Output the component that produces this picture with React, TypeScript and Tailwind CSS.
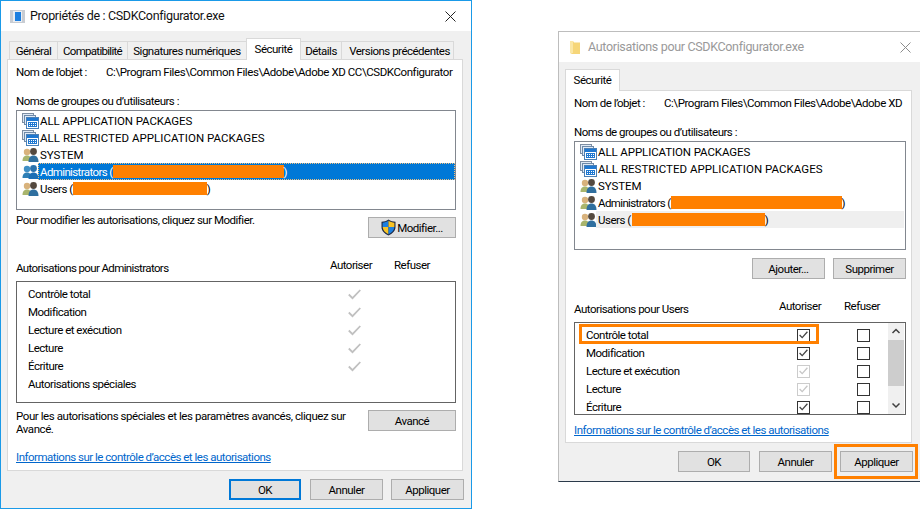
import React from "react";

function PackageIcon() {
  return (
    <svg width="17" height="16" viewBox="0 0 17 16" className="shrink-0">
      <rect x="0.5" y="0.5" width="11" height="9" fill="#dfe9f5" stroke="#7d8ea3" />
      <rect x="2.5" y="2.5" width="11" height="9" fill="#dfe9f5" stroke="#6f8aa8" />
      <rect x="4.5" y="4.5" width="12" height="11" fill="#fff" stroke="#4a7fb5" />
      <rect x="5" y="5" width="11" height="3" fill="#1f78d1" />
      <rect x="6" y="9" width="9" height="5" fill="#1f78d1" />
      <path d="M7 10.5h1M9 10.5h1M11 10.5h1M13 10.5h1M7 12.5h1M9 12.5h1M11 12.5h1M13 12.5h1" stroke="#fff" strokeWidth="1" />
    </svg>
  );
}

function UsersIcon({ selected = false }: { selected?: boolean }) {
  const a = selected ? "#2f7fb5" : "#a9b56d";
  const aHead = selected ? "#3f8fc4" : "#d8b27c";
  const b = selected ? "#1c6fb5" : "#2f6f9f";
  const bHead = selected ? "#2a72ad" : "#54493f";
  return (
    <svg width="17" height="16" viewBox="0 0 17 16" className="shrink-0">
      <circle cx="5" cy="5" r="3.2" fill={aHead} />
      <path d="M0.5 14c0-4 2-5.5 4.5-5.5S9.5 10 9.5 14z" fill={a} />
      <circle cx="11.5" cy="4.5" r="3.4" fill={bHead} />
      <path d="M6.5 15c0-4.5 2.200-6.500 5-6.500s5 2 5 6.500z" fill={b} />
    </svg>
  );
}

function Shield() {
  return (
    <svg width="15" height="17" viewBox="0 0 15 17" className="shrink-0">
      <path d="M7.500 0.500C5.500 2 3 2.700 0.500 2.700V8c0 4 3 6.700 7 8.500 4-1.800 7-4.500 7-8.500V2.700C12 2.700 9.500 2 7.500 0.500z" fill="#1f2a44" />
      <path d="M7.500 1.800V8H1.600V3.700C3.600 3.600 5.800 3 7.500 1.800z" fill="#1c7fe0" />
      <path d="M7.500 1.800V8h5.900V3.700C11.400 3.600 9.200 3 7.500 1.800z" fill="#f7c325" />
      <path d="M7.500 8v7.200C4.500 13.800 1.900 11.500 1.600 8z" fill="#f7c325" />
      <path d="M7.500 8v7.200c3-1.400 5.600-3.700 5.900-7.200z" fill="#1c7fe0" />
    </svg>
  );
}

function Folder() {
  return (
    <svg width="10" height="14" viewBox="0 0 10 14">
      <path d="M0 1h3l1 1.500h6V14H2l-2-1z" fill="#f6d679" />
      <path d="M0 1h3v12H0z" fill="#fbe7a6" />
    </svg>
  );
}

function CloseX({ color }: { color: string }) {
  return (
    <svg width="11" height="11" viewBox="0 0 11 11">
      <path d="M0.500 0.500l10 10M10.500 0.500l-10 10" stroke={color} strokeWidth="1" />
    </svg>
  );
}

function Check({ color = "#c0c0c0" }: { color?: string }) {
  return (
    <svg width="13" height="11" viewBox="0 0 13 11">
      <path d="M0.800 5.500l3.700 3.700L12.300 1" fill="none" stroke={color} strokeWidth="1.800" />
    </svg>
  );
}

function Box({ state }: { state: "off" | "on" | "grey" }) {
  const border = state === "grey" ? "border-[#cccccc]" : "border-[#333333]";
  return (
    <span className={`flex h-[13px] w-[13px] items-center justify-center border bg-white ${border}`}>
      {state !== "off" && (
        <svg width="9" height="8" viewBox="0 0 9 8">
          <path d="M0.600 4l2.600 2.600L8.400 0.800" fill="none" stroke={state === "grey" ? "#c6c6c6" : "#444444"} strokeWidth="1.300" />
        </svg>
      )}
    </span>
  );
}

function Btn({ children, w = "w-[73px]", active = false }: { children: React.ReactNode; w?: string; active?: boolean }) {
  return (
    <div
      className={`flex h-[21px] shrink-0 items-center justify-center whitespace-nowrap bg-[#e1e1e1] ${w} ${
        active ? "border-2 border-[#0078d7]" : "border border-[#adadad]"
      }`}
    >
      {children}
    </div>
  );
}

function Row({ icon, children, cls = "" }: { icon: React.ReactNode; children: React.ReactNode; cls?: string }) {
  return (
    <div className="flex h-[17px] items-center whitespace-pre pl-[5px]">
      <span className="flex w-[16px] shrink-0 items-center">{icon}</span>
      <div className={`flex h-[17px] flex-1 items-center pl-[2px] pr-[1px] ${cls}`}>{children}</div>
    </div>
  );
}

function Redact({ w }: { w: string }) {
  return <span className={`inline-block h-[13px] bg-[#ff8000] ${w}`} />;
}

function Tab({ children, w, on = false }: { children: React.ReactNode; w: string; on?: boolean }) {
  return on ? (
    <div className={`z-10 flex h-[22px] items-center justify-center whitespace-nowrap border border-b-0 border-[#d9d9d9] bg-white pb-[2px] ${w}`}>{children}</div>
  ) : (
    <div className={`mt-[3px] flex h-[18px] items-center justify-center whitespace-nowrap border border-b-0 border-[#d9d9d9] bg-[#f0f0f0] ${w}`}>{children}</div>
  );
}

const LINK = "Informations sur le contrôle d’accès et les autorisations";

export default function App() {
  return (
    <div className="relative h-[509px] w-[920px] overflow-hidden bg-white font-['Roboto','Liberation_Sans',sans-serif] text-[11.5px] leading-[16px] tracking-[-0.5px] text-black">
      <div className="flex items-start">
        {/* Left dialog */}
        <div className="flex h-[509px] w-[472px] shrink-0 flex-col border border-[#1a9ae8] bg-[#f0f0f0]">
          <div className="flex h-[30px] shrink-0 items-center bg-white pl-[9px] pr-[15px]">
            <span className="mr-[5px] flex h-[13px] w-[15px] items-center justify-center border-x-[3px] border-y border-[#c8ccd2] bg-[#e9edf2]">
              <span className="h-[9px] w-[6px] bg-[#1c7fe0]" />
            </span>
            <span className="flex-1 text-[12.5px] tracking-[-0.33px] text-[#111]">Propriétés de : CSDKConfigurator.exe</span>
            <CloseX color="#222" />
          </div>
          <div className="flex h-[478px] flex-col pl-[6px] pt-[7px]">
            <div className="flex h-[21px] pl-[2px]">
              <Tab w="w-[49px]">Général</Tab>
              <Tab w="w-[71px] -ml-px tracking-[-0.7px]">Compatibilité</Tab>
              <Tab w="w-[120px] -ml-px">Signatures numériques</Tab>
              <Tab w="w-[55px] -ml-px" on>Sécurité</Tab>
              <Tab w="w-[42px] -ml-px">Détails</Tab>
              <Tab w="w-[113px] -ml-px pl-[4px]">Versions précédentes</Tab>
            </div>
            <div className="flex h-[412px] w-[456px] flex-col border border-[#d9d9d9] bg-white px-[8px]">
              <div className="mt-[4px] flex h-[16px] items-center whitespace-nowrap">
                <span className="w-[90px]">Nom de l’objet :</span>
                <span className="tracking-[-0.42px]">C:\Program Files\Common Files\Adobe\Adobe XD CC\CSDKConfigurator</span>
              </div>
              <div className="mt-[13px] h-[16px]">Noms de groupes ou d’utilisateurs :</div>
              <div className="mt-[1px] h-[100px] w-[440px] border border-[#82878f] pt-[1px]">
                <Row icon={<PackageIcon />}><span className="tracking-[-0.1px]">ALL APPLICATION PACKAGES</span></Row>
                <Row icon={<PackageIcon />}><span className="tracking-[0.04px]">ALL RESTRICTED APPLICATION PACKAGES</span></Row>
                <Row icon={<UsersIcon />}><span className="tracking-[-0.07px]">SYSTEM</span></Row>
                <Row icon={<UsersIcon selected />} cls="bg-[#0078d7] text-white outline-1 -outline-offset-1 outline-dotted outline-[#f0c080]">
                  <span className="tracking-[-0.62px]">Administrators (</span><Redact w="w-[171px]" />)
                </Row>
                <Row icon={<UsersIcon />}>
                  Users (<Redact w="w-[134px]" />)
                </Row>
              </div>
              <div className="mt-[7px] flex h-[22px] w-[440px] items-start justify-between">
                <span className="-mt-[5px]">Pour modifier les autorisations, cliquez sur Modifier.</span>
                <Btn w="w-[88px]">
                  <span className="mr-[1px]"><Shield /></span>Modifier...
                </Btn>
              </div>
              <div className="mt-[18px] flex h-[16px] w-[440px]">
                <span className="flex-1 pt-[3px] tracking-[-0.62px]">Autorisations pour Administrators</span>
                <span className="w-[60px] text-center">Autoriser</span>
                <span className="ml-[9px] mr-[22px] w-[44px] text-center">Refuser</span>
              </div>
              <div className="mt-[8px] h-[122px] w-[440px] border border-[#646464] pl-[11px] pt-[3px]">
                {["Contrôle total", "Modification", "Lecture et exécution", "Lecture", "Écriture", "Autorisations spéciales"].map((t, i) => (
                  <div key={t} className="flex h-[18px] items-center">
                    <span className="w-[320px]">{t}</span>
                    {i < 5 && <Check />}
                  </div>
                ))}
              </div>
              <div className="mt-[7px] flex h-[32px] w-[440px] justify-between">
                <span className="w-[340px] leading-[13px] tracking-[-0.43px]">
                  Pour les autorisations spéciales et les paramètres avancés, cliquez sur Avancé.
                </span>
                <Btn w="w-[88px]">Avancé</Btn>
              </div>
              <div className="mt-[7px] h-[16px] text-[#0066cc] underline">{LINK}</div>
            </div>
            <div className="mt-[8px] flex w-[457px] justify-end gap-[9px]">
              <Btn active w="w-[72px]">OK</Btn>
              <Btn>Annuler</Btn>
              <div className="-ml-[1px]"><Btn>Appliquer</Btn></div>
            </div>
          </div>
        </div>

        {/* Right dialog */}
        <div className="ml-[86px] mt-[31px] flex h-[451px] w-[362px] shrink-0 flex-col border-y border-l border-t-[#bdbdbd] border-b-[#2b3a4a] border-l-[#bdbdbd] bg-[#f0f0f0]">
          <div className="flex h-[30px] shrink-0 items-center bg-white pl-[11px] pr-[9px]">
            <span className="mr-[8px] flex"><Folder /></span>
            <span className="flex-1 text-[12.5px] tracking-[-0.33px] text-[#999999]">Autorisations pour CSDKConfigurator.exe</span>
            <CloseX color="#8c8c8c" />
          </div>
          <div className="flex flex-col pl-[6px] pt-[7px]">
            <div className="flex h-[21px]">
              <div className="z-10 flex h-[22px] w-[55px] items-center justify-center border border-b-0 border-[#d9d9d9] bg-white pb-[1px]">Sécurité</div>
            </div>
            <div className="flex h-[353px] w-[347px] flex-col border border-[#d9d9d9] bg-white pl-[8px]">
              <div className="mt-[4px] flex h-[16px] items-center whitespace-nowrap">
                <span className="w-[90px]">Nom de l’objet :</span>
                <span className="tracking-[-0.45px]">C:\Program Files\Common Files\Adobe\Adobe XD</span>
              </div>
              <div className="mt-[13px] h-[16px]">Noms de groupes ou d’utilisateurs :</div>
              <div className="mt-[1px] h-[109px] w-[332px] border border-[#82878f] pt-[1px]">
                <Row icon={<PackageIcon />}><span className="tracking-[-0.1px]">ALL APPLICATION PACKAGES</span></Row>
                <Row icon={<PackageIcon />}><span className="tracking-[0.04px]">ALL RESTRICTED APPLICATION PACKAGES</span></Row>
                <Row icon={<UsersIcon />}><span className="tracking-[-0.07px]">SYSTEM</span></Row>
                <Row icon={<UsersIcon />}>
                  <span className="tracking-[-0.62px]">Administrators (</span><Redact w="w-[171px]" />)
                </Row>
                <Row icon={<UsersIcon />} cls="bg-[#efefef] mr-[1px]">
                  Users (<Redact w="ml-[1px] w-[133px]" />)
                </Row>
              </div>
              <div className="mt-[8px] flex h-[21px] w-[332px] justify-end gap-[8px]">
                <Btn>Ajouter...</Btn>
                <Btn>Supprimer</Btn>
              </div>
              <div className="mt-[19px] flex h-[16px] w-[332px]">
                <span className="w-[196px] pt-[3px]">Autorisations pour Users</span>
                <span className="w-[60px] text-center">Autoriser</span>
                <span className="ml-[2px] w-[60px] text-center">Refuser</span>
              </div>
              <div className="relative mt-[8px] flex h-[93px] w-[332px] border border-[#646464]">
                <div className="flex-1 pl-[11px] pt-[3px]">
                  {[
                    ["Contrôle total", "on"],
                    ["Modification", "on"],
                    ["Lecture et exécution", "grey"],
                    ["Lecture", "grey"],
                    ["Écriture", "on"],
                  ].map(([t, s]) => (
                    <div key={t} className="flex h-[18px] items-center">
                      <span className="w-[211px]">{t}</span>
                      <Box state={s as "on" | "grey"} />
                      <span className="ml-[47px]"><Box state="off" /></span>
                    </div>
                  ))}
                </div>
                <div className="mr-[1px] flex w-[16px] shrink-0 flex-col items-center bg-[#f0f0f0]">
                  <svg width="16" height="17" viewBox="0 0 16 17">
                    <path d="M4.500 10l3.500-3.500L11.500 10" fill="none" stroke="#404040" strokeWidth="1.500" />
                  </svg>
                  <div className="h-[46px] w-[16px] bg-[#cdcdcd]" />
                  <div className="flex-1" />
                  <svg width="16" height="17" viewBox="0 0 16 17">
                    <path d="M4.500 6.500L8 10l3.500-3.500" fill="none" stroke="#404040" strokeWidth="1.500" />
                  </svg>
                </div>
                <div className="absolute left-[4px] top-[1px] h-[20px] w-[240px] border-[3px] border-[#ff8000]" />
              </div>
              <div className="mt-[7px] h-[16px] text-[#0066cc] underline">{LINK}</div>
            </div>
            <div className="mt-[8px] flex w-[348px] justify-end gap-[9px]">
              <Btn w="w-[72px]">OK</Btn>
              <Btn>Annuler</Btn>
              <div className="relative -ml-[1px]">
                <Btn>Appliquer</Btn>
                <div className="absolute -bottom-[7px] -left-[6px] -right-[5px] -top-[7px] border-[3px] border-[#ff8000]" />
              </div>
            </div>
          </div>
        </div>
      </div>
    </div>
  );
}
